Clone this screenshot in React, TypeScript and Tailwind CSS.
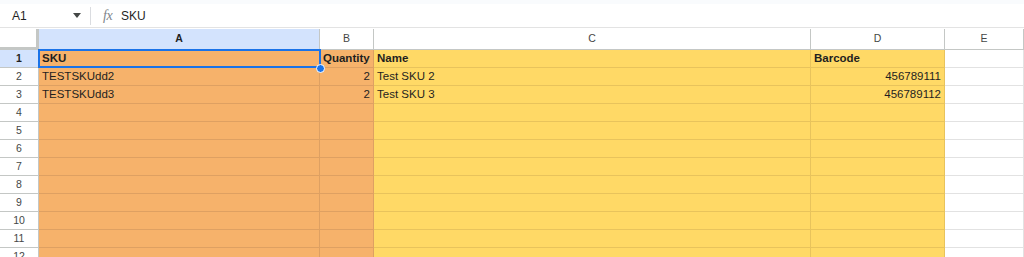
const COLS = [
  { key: "A", w: "w-[281px]", bg: "bg-[#f6b26b]", line: "border-[#dea062]" },
  { key: "B", w: "w-[54px]", bg: "bg-[#f6b26b]", line: "border-[#dea062]" },
  { key: "C", w: "w-[437px]", bg: "bg-[#ffd966]", line: "border-[#e8c35c]" },
  { key: "D", w: "w-[134px]", bg: "bg-[#ffd966]", line: "border-[#e8c35c]" },
  { key: "E", w: "flex-1", bg: "bg-white", line: "border-[#e2e2e2]" },
];

type Cell = { text: string; bold?: boolean; right?: boolean };

const DATA: Cell[][] = [
  [{ text: "SKU", bold: true }, { text: "Quantity", bold: true }, { text: "Name", bold: true }, { text: "Barcode", bold: true }, { text: "" }],
  [{ text: "TESTSKUdd2" }, { text: "2", right: true }, { text: "Test SKU 2" }, { text: "456789111", right: true }, { text: "" }],
  [{ text: "TESTSKUdd3" }, { text: "2", right: true }, { text: "Test SKU 3" }, { text: "456789112", right: true }, { text: "" }],
];

const ROW_COUNT = 12;

export default function App() {
  const rows = Array.from({ length: ROW_COUNT }, (_, i) => DATA[i] ?? COLS.map(() => ({ text: "" })));

  return (
    <div className="w-[1024px] h-[257px] overflow-hidden bg-white font-['Liberation_Sans',Arial,sans-serif] text-[#1f1f1f]">
      {/* formula bar */}
      <div className="h-[4px] bg-[#f9fbfd]" />
      <div className="h-[24px] flex items-center border-b border-[#e3e3e3] text-[12px]">
        <div className="w-[90px] flex items-center pl-[12px] pr-[8px] justify-between">
          <span>A1</span>
          <svg width="8" height="5" viewBox="0 0 8 5" className="mr-[1px]">
            <path d="M0 0 L8 0 L4 5 Z" fill="#444746" />
          </svg>
        </div>
        <div className="w-px h-[18px] bg-[#dadce0]" />
        <span className="ml-[12px] italic text-[#80868b] font-['Liberation_Serif',serif] text-[14px] tracking-[-0.5px]">fx</span>
        <span className="ml-[9px]">SKU</span>
      </div>
      <div className="h-[1px]" />

      {/* column headers */}
      <div className="flex h-[21px] text-[10.5px] text-[#444746]">
        <div className="w-[39px] shrink-0 bg-white border-r-[3px] border-b-[3px] border-[#c4c7c5]" />
        {COLS.map((c) => (
          <div
            key={c.key}
            className={`${c.w} shrink-0 flex items-center justify-center border-r border-b border-[#c4c7c5] ${c.key === "A" ? "bg-[#d3e3fd] text-[#1f1f1f] font-bold" : "bg-white"}`}
          >
            {c.key}
          </div>
        ))}
      </div>

      {/* rows */}
      <div className="relative">
        {rows.map((row, r) => (
          <div key={r} className="flex h-[18px] text-[11.5px]">
            <div
              className={`w-[39px] shrink-0 flex items-center justify-center border-r border-b border-[#c4c7c5] text-[10.5px] ${r === 0 ? "bg-[#d3e3fd] font-bold text-[#1f1f1f]" : "bg-white text-[#444746]"}`}
            >
              {r + 1}
            </div>
            {COLS.map((c, ci) => {
              const cell = row[ci];
              return (
                <div
                  key={c.key}
                  className={`${c.w} shrink-0 ${c.bg} border-r border-b ${c.line} flex items-center px-[3px] whitespace-nowrap overflow-hidden ${cell.right ? "justify-end" : ""} ${cell.bold ? "font-bold" : ""}`}
                >
                  {cell.text}
                </div>
              );
            })}
          </div>
        ))}

        {/* selection of A1 */}
        <div className="absolute left-[38px] top-[-1px] w-[283px] h-[19px] border-2 border-[#1a73e8] pointer-events-none" />
        <div className="absolute left-[316px] top-[14px] w-[9px] h-[9px] rounded-full bg-[#1a73e8] border-[1.5px] border-white pointer-events-none" />
      </div>
    </div>
  );
}
